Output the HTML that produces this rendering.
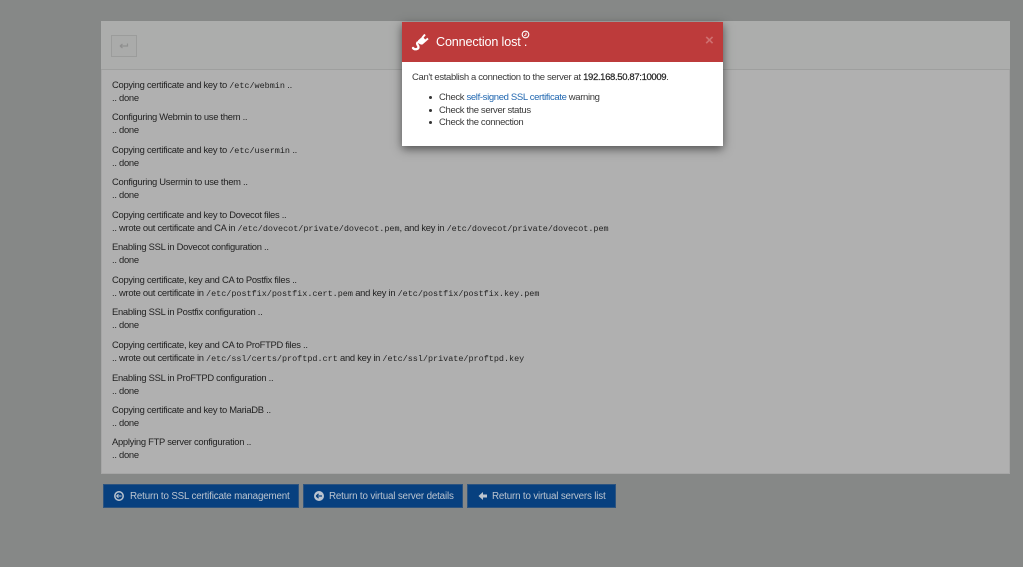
<!DOCTYPE html>
<html><head><meta charset="utf-8"><style>
*{box-sizing:border-box}
html,body{margin:0;padding:0;width:1023px;height:567px;overflow:hidden;background:#868887;font-family:"Liberation Sans",sans-serif}
.abs{position:absolute}
#panel{left:101px;top:21px;width:909px;height:453px;background:#b0b0b0;border:1px solid #a6a6a6}
#head{left:101px;top:21px;width:909px;height:49px;background:#acadac;border-bottom:1px solid #9e9f9e}
#back{left:111px;top:35px;width:26px;height:22px;border:1px solid #9b9c9b;background:#aaabaa}
.t{position:absolute;left:112px;font-size:9.4px;letter-spacing:-.27px;line-height:13px;color:#222;white-space:pre;margin-top:-1px}
.t code{font-family:"Liberation Mono",monospace;font-size:8.45px;letter-spacing:0}
.btn{position:absolute;top:484px;height:24px;background:#07407f;border:1px solid #2d5480;color:#bcc5d0;font-size:9.8px;letter-spacing:-.17px;line-height:22px;white-space:pre}
.btn span{position:absolute;top:1px}
.btn svg{position:absolute;top:5px}
#modal{left:402px;top:22px;width:321px;height:124px;background:#fff;box-shadow:0 3px 9px rgba(0,0,0,.55)}
#mh{left:402px;top:22px;width:321px;height:40px;background:#bd3b3b}
.m{position:absolute;font-size:9.5px;letter-spacing:-.35px;line-height:12px;color:#3a3a3a;white-space:pre}
</style></head><body>
<div class="abs" id="panel"></div>
<div class="abs" id="head"></div>
<div class="abs" id="back"><svg width="24" height="20" style="display:block"><path d="M8 10H15.500V7.500M8 10L10.500 8M8 10L10.500 12" fill="none" stroke="#8f908f" stroke-width="1.200"/></svg></div>

<div class="t" style="top:79px">Copying certificate and key to <code>/etc/webmin</code> ..</div>
<div class="t" style="top:92px">.. done</div>
<div class="t" style="top:111px">Configuring Webmin to use them ..</div>
<div class="t" style="top:124px">.. done</div>
<div class="t" style="top:144px">Copying certificate and key to <code>/etc/usermin</code> ..</div>
<div class="t" style="top:157px">.. done</div>
<div class="t" style="top:176px">Configuring Usermin to use them ..</div>
<div class="t" style="top:189px">.. done</div>
<div class="t" style="top:209px">Copying certificate and key to Dovecot files ..</div>
<div class="t" style="top:222px">.. wrote out certificate and CA in <code>/etc/dovecot/private/dovecot.pem</code>, and key in <code>/etc/dovecot/private/dovecot.pem</code></div>
<div class="t" style="top:241px">Enabling SSL in Dovecot configuration ..</div>
<div class="t" style="top:254px">.. done</div>
<div class="t" style="top:274px">Copying certificate, key and CA to Postfix files ..</div>
<div class="t" style="top:287px">.. wrote out certificate in <code>/etc/postfix/postfix.cert.pem</code> and key in <code>/etc/postfix/postfix.key.pem</code></div>
<div class="t" style="top:306px">Enabling SSL in Postfix configuration ..</div>
<div class="t" style="top:319px">.. done</div>
<div class="t" style="top:339px">Copying certificate, key and CA to ProFTPD files ..</div>
<div class="t" style="top:352px">.. wrote out certificate in <code>/etc/ssl/certs/proftpd.crt</code> and key in <code>/etc/ssl/private/proftpd.key</code></div>
<div class="t" style="top:372px">Enabling SSL in ProFTPD configuration ..</div>
<div class="t" style="top:385px">.. done</div>
<div class="t" style="top:404px">Copying certificate and key to MariaDB ..</div>
<div class="t" style="top:417px">.. done</div>
<div class="t" style="top:436px">Applying FTP server configuration ..</div>
<div class="t" style="top:449px">.. done</div>

<div class="btn" style="left:103px;width:196px"><svg style="left:9px" width="12" height="12"><circle cx="6" cy="6" r="4.200" fill="none" stroke="#bcc5d0" stroke-width="1.500"/><path d="M3.500 6H8.500M3.500 6L5.500 4.200M3.500 6L5.500 7.800" fill="none" stroke="#bcc5d0"/></svg><span style="left:26px">Return to SSL certificate management</span></div>
<div class="btn" style="left:303px;width:160px"><svg style="left:9px" width="12" height="12"><circle cx="6" cy="6" r="5" fill="#bcc5d0"/><path d="M3.200 6H9M3.200 6L5.600 3.800M3.200 6L5.600 8.200" fill="none" stroke="#07407f" stroke-width="1.200"/></svg><span style="left:25px">Return to virtual server details</span></div>
<div class="btn" style="left:467px;width:149px"><svg style="left:9px" width="12" height="12"><path d="M1.500 6L6 2V4.500H10V7.500H6V10Z" fill="#bcc5d0"/></svg><span style="left:24px">Return to virtual servers list</span></div>

<div class="abs" id="modal"></div>
<div class="abs" id="mh"></div>
<svg class="abs" style="left:410px;top:32px" width="20" height="20" viewBox="0 0 20 20"><path d="M3 16C4.500 18 8.500 17.500 8.500 15C8.500 13 6 12.500 7.500 10.500" fill="none" stroke="#fff" stroke-width="2.300" stroke-linecap="round"/><path d="M8 8.500L12.500 4.500L16.500 9L12.500 12.500C10 13 7.500 11 8 8.500Z" fill="#fff"/><path d="M12.500 5.500L15 2.500M15.500 8.500L18 6.500" stroke="#fff" stroke-width="2" fill="none"/></svg>
<div class="abs" style="left:436px;top:33px;font-size:12.600px;letter-spacing:-.15px;line-height:18px;color:#fff;white-space:pre">Connection lost .</div>
<svg class="abs" style="left:521px;top:30px" width="9" height="9"><circle cx="4.500" cy="4.500" r="3.300" fill="none" stroke="#fff" stroke-width="1.100"/><path d="M5 2.800V4.800L3.200 5.800" fill="none" stroke="#fff" stroke-width=".9"/></svg>
<div class="abs" style="left:705px;top:33px;font-size:15px;line-height:16px;font-weight:bold;color:#cf7070">×</div>

<div class="m" style="left:412px;top:72px">Can't establish a connection to the server at <span style="color:#222;-webkit-text-stroke:.2px #222">192.168.50.87:10009</span>.</div>
<div class="abs" style="left:429px;top:96px;width:3px;height:3px;border-radius:50%;background:#333"></div>
<div class="abs" style="left:429px;top:109px;width:3px;height:3px;border-radius:50%;background:#333"></div>
<div class="abs" style="left:429px;top:121px;width:3px;height:3px;border-radius:50%;background:#333"></div>
<div class="m" style="left:439px;top:92px">Check <span style="color:#1f66b0">self-signed SSL certificate</span> warning</div>
<div class="m" style="left:439px;top:105px">Check the server status</div>
<div class="m" style="left:439px;top:117px">Check the connection</div>
</body></html>
